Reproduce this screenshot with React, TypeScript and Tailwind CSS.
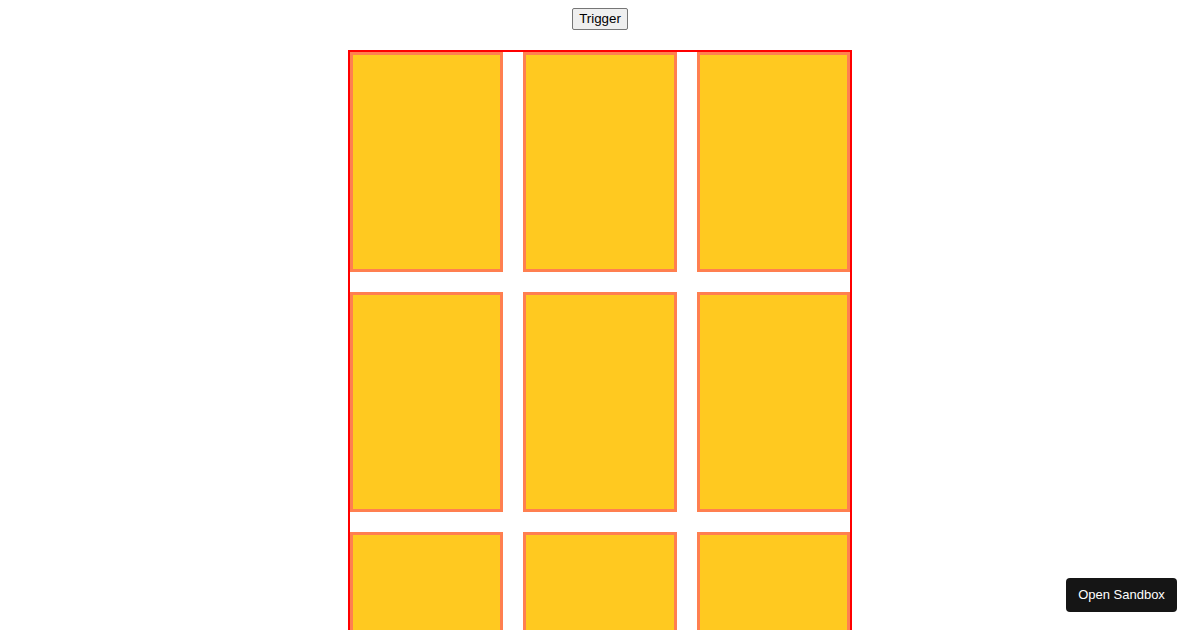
export default function App() {
  const cells = Array.from({ length: 9 }, (_, i) => i);

  return (
    <div className="min-h-[630px] bg-white font-['Liberation_Sans',Arial,sans-serif]">
      <div className="flex justify-center pt-2">
        <button className="h-[22px] rounded-[2px] border border-[#767676] bg-[#efefef] px-[6px] text-[13.33px] leading-none text-black">
          Trigger
        </button>
      </div>

      <div className="mx-auto mt-5 grid w-[504px] grid-cols-3 gap-5 border-2 border-[#ff0000]">
        {cells.map((i) => (
          <div key={i} className="h-[220px] border-[3px] border-[#ff7f50] bg-[#ffc920]" />
        ))}
      </div>

      <button className="fixed right-[23px] bottom-[18px] h-[34px] w-[111px] rounded-[4px] bg-[#151515] text-[13px] text-white">
        Open Sandbox
      </button>
    </div>
  );
}
